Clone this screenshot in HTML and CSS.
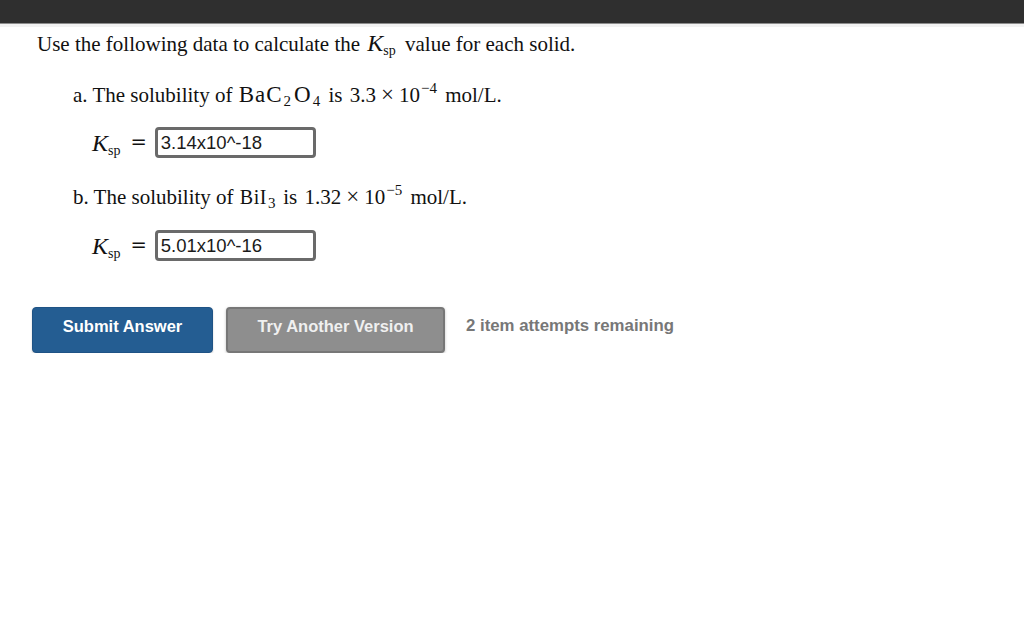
FILE: index.html
```html
<!DOCTYPE html>
<html>
<head>
<meta charset="utf-8">
<link rel="stylesheet" href="styles.css">
</head>
<body>
<div class="topbar"></div>
<div class="topshade"></div>
<main class="content">
  <div class="line intro">Use the following data to calculate the <span class="math ksp"><i class="k">K</i><sub class="sub">sp</sub></span> value for each solid.</div>
  <div class="line part pa">a. The solubility of <span class="math chem">BaC<sub class="n">2</sub>O<sub class="n">4</sub></span> is <span class="math num">3.3<span class="times">×</span>10<sup class="e">−4</sup></span> mol/L.</div>
  <div class="answer a1">
    <span class="math lbl"><i class="k">K</i><sub class="sub">sp</sub></span>
    <span class="eq">=</span>
    <div class="box">3.14x10^-18</div>
  </div>
  <div class="line part pb">b. The solubility of <span class="math chem sm">BiI<sub class="n">3</sub></span> is <span class="math num">1.32<span class="times">×</span>10<sup class="e">−5</sup></span> mol/L.</div>
  <div class="answer a2">
    <span class="math lbl"><i class="k">K</i><sub class="sub">sp</sub></span>
    <span class="eq">=</span>
    <div class="box">5.01x10^-16</div>
  </div>
  <div class="actions">
    <button class="btn submit">Submit Answer</button>
    <button class="btn another">Try Another Version</button>
    <span class="remaining">2 item attempts remaining</span>
  </div>
</main>
</body>
</html>
```

FILE: styles.css
```css
html, body {
  margin: 0;
  padding: 0;
  background: #ffffff;
}
body {
  font-family: "Liberation Serif", "Times New Roman", serif;
  color: #111;
}
.topbar {
  height: 23px;
  background: #2f2f2f;
  border-bottom: 1px solid #8c8c8c;
}
.topshade {
  height: 3px;
  background: #f2f2f2;
}
.content {
  padding: 4px 0 0 37px;
}
.line {
  font-size: 21px;
  line-height: 24px;
  height: 24px;
  white-space: nowrap;
}
.part {
  padding-left: 36px;
}
.pa { margin-top: 28px; }
.pb { margin-top: 27px; }
.math {
  font-family: "Liberation Serif", "DejaVu Serif", serif;
  font-size: 21px;
}
.ksp {
  margin-left: 2px;
  margin-right: 4px;
}
.chem {
  font-size: 23px;
  letter-spacing: 1px;
  margin-left: 1px;
}
.chem.sm {
  font-size: 20px;
  letter-spacing: 0.5px;
  margin-left: 1px;
}
.num {
  margin-left: 2px;
}
.times {
  font-size: 23px;
  margin: 0 5px;
}
.k {
  font-size: 24px;
  font-style: italic;
}
.sub {
  font-size: 14px;
  vertical-align: -4px;
  line-height: 0;
  margin-left: 0;
}
.n {
  font-size: 15px;
  vertical-align: -4px;
  line-height: 0;
  margin-left: 1px;
  margin-right: 2px;
}
.e {
  font-size: 15px;
  vertical-align: 9px;
  line-height: 0;
  margin-left: 1px;
  margin-right: 3px;
}
.answer {
  display: flex;
  align-items: center;
  padding-left: 55px;
  height: 31px;
}
.a1 { margin-top: 20px; }
.a2 { margin-top: 21px; }
.lbl {
  margin-top: 1px;
}
.eq {
  font-family: "DejaVu Serif", serif;
  font-size: 19.5px;
  margin: 0 8px 0 10px;
}
.box {
  box-sizing: border-box;
  width: 161px;
  height: 31px;
  border: 3px solid #6a6a6a;
  border-radius: 4px;
  font-family: "Liberation Sans", Arial, sans-serif;
  font-size: 18.5px;
  line-height: 25px;
  padding-left: 3px;
  color: #1a1a1a;
}
.actions {
  display: flex;
  align-items: center;
  margin-top: 46px;
  margin-left: -5px;
}
.btn {
  box-sizing: border-box;
  height: 46px;
  border-radius: 4px;
  font-family: "Liberation Sans", Arial, sans-serif;
  font-weight: bold;
  font-size: 16.5px;
  padding: 0 0 8px 0;
  cursor: pointer;
}
.submit {
  width: 181px;
  background: #245d92;
  color: #ffffff;
  border: 1px solid #1f5385;
  box-shadow: 0 1px 2px rgba(0,0,0,0.2);
}
.another {
  width: 219px;
  margin-left: 13px;
  background: #8e8e8e;
  color: #f0f0f0;
  border: 2px solid #777777;
  box-shadow: 0 1px 3px rgba(0,0,0,0.25);
}
.remaining {
  margin-left: 21px;
  margin-bottom: 8px;
  font-family: "Liberation Sans", Arial, sans-serif;
  font-weight: bold;
  font-size: 16.8px;
  color: #777777;
}
```
